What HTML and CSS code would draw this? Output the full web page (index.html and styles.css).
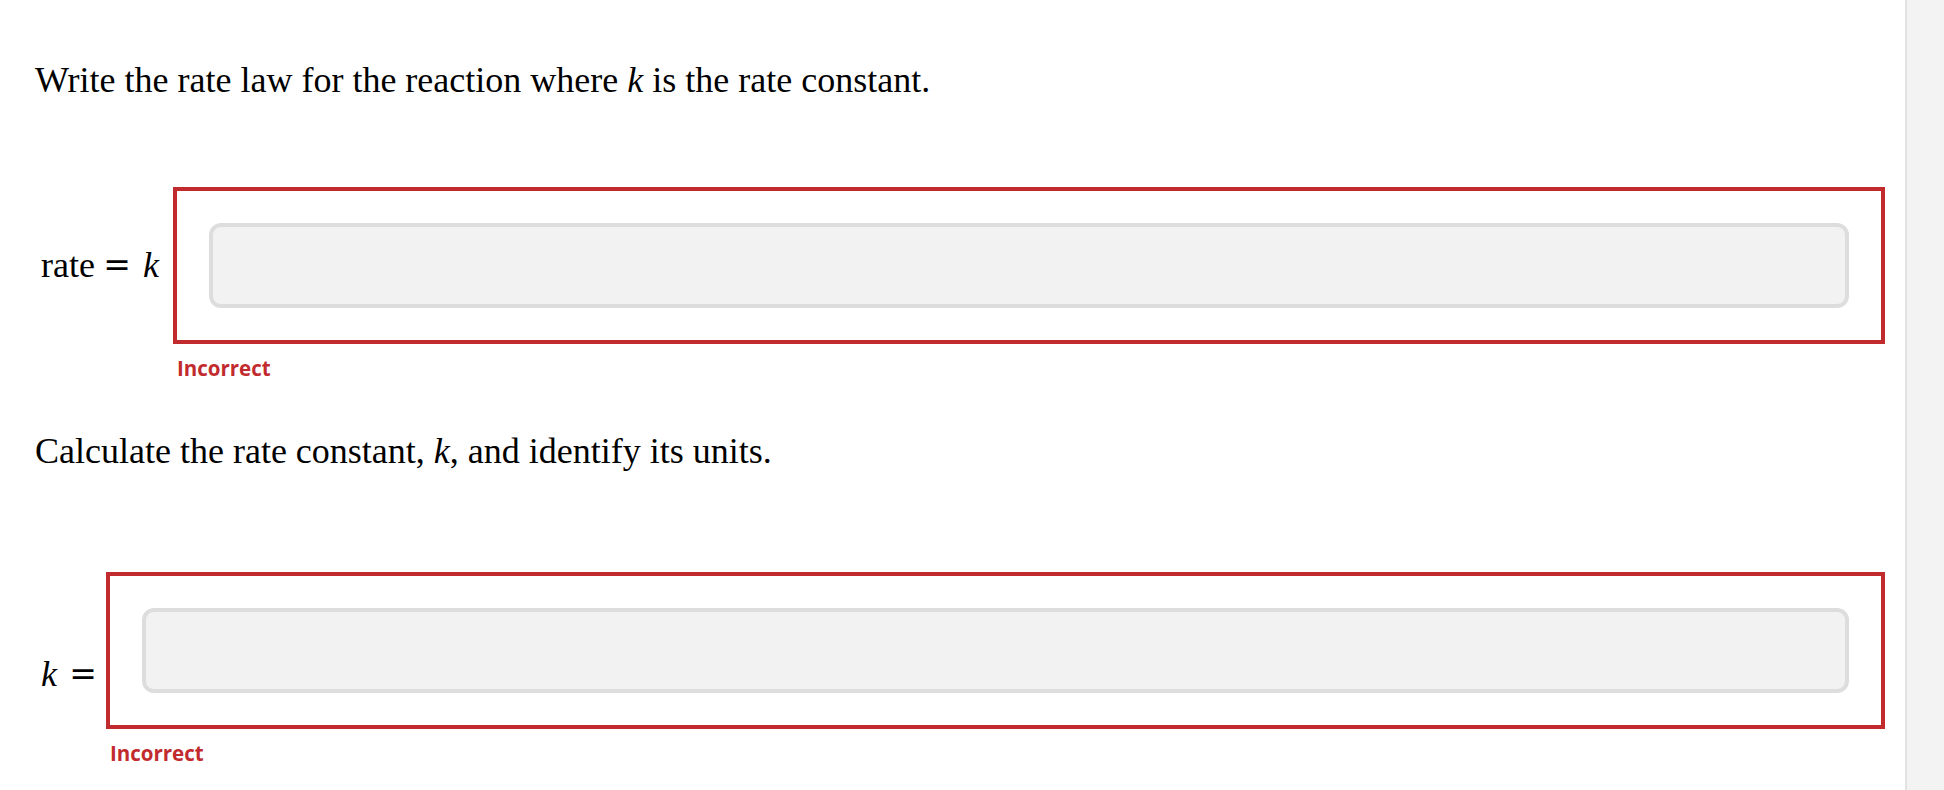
FILE: index.html
```html
<!DOCTYPE html>
<html lang="en">
<head>
<meta charset="utf-8">
<title>Rate law</title>
<link rel="stylesheet" href="styles.css">
</head>
<body>
<div class="page">
  <main class="content">
    <p class="question q1">Write the rate law for the reaction where <i class="var">k</i> is the rate constant.</p>

    <div class="answer-row row1">
      <div class="label"><span class="word">rate</span><span class="rel">=</span><i class="var">k</i></div>
      <div class="field">
        <div class="answer-box"><div class="input"></div></div>
        <div class="feedback">Incorrect</div>
      </div>
    </div>

    <p class="question q2">Calculate the rate constant, <i class="var">k</i>, and identify its units.</p>

    <div class="answer-row row2">
      <div class="label"><i class="var">k</i><span class="rel">=</span></div>
      <div class="field">
        <div class="answer-box"><div class="input"></div></div>
        <div class="feedback">Incorrect</div>
      </div>
    </div>
  </main>
  <div class="scrollbar"></div>
</div>
</body>
</html>
```

FILE: styles.css
```css
html, body {
  margin: 0;
  padding: 0;
  background: #ffffff;
}

.page {
  display: flex;
  height: 790px;
  overflow: hidden;
}

.content {
  flex: 1;
  padding: 0 20px 0 35px;
  font-family: "Liberation Serif", "Times New Roman", serif;
  color: #000;
}

.question {
  margin: 0;
  font-size: 36px;
  line-height: 42px;
}

.q1 { margin-top: 59px; }
.q2 { margin-top: 48px; }

.var {
  font-style: italic;
}

.answer-row {
  display: flex;
  padding-left: 6px;
}

.row1 { margin-top: 86px; }
.row2 { margin-top: 100px; }

.label {
  font-size: 36px;
  line-height: 42px;
  white-space: nowrap;
  height: 42px;
}

.rel {
  display: inline-block;
  width: 28px;
  text-align: center;
  font-family: "DejaVu Serif", "Liberation Serif", serif;
  font-size: 33px;
  vertical-align: 1px;
}

.row1 .label {
  margin-top: 57px;
  margin-right: 14px;
}

.row1 .rel {
  margin: 0 12px 0 8px;
}

.row2 .label {
  margin-top: 81px;
  margin-right: 9px;
}

.row2 .rel {
  margin: 0 0 0 12px;
}

.field {
  flex: 1;
  display: flex;
  flex-direction: column;
}

.answer-box {
  border: 4px solid #c22b2e;
  padding: 32px;
}

.input {
  height: 77px;
  background: #f2f2f2;
  border: 4px solid #dddddd;
  border-radius: 12px;
}

.feedback {
  margin-top: 10px;
  padding-left: 4px;
  font-family: "Open Sans", "Noto Sans", sans-serif;
  font-weight: 700;
  font-size: 20.5px;
  line-height: 28px;
  color: #c22b2e;
}

.scrollbar {
  width: 37px;
  flex: none;
  border-left: 2px solid #e2e2e2;
  background: #f3f3f3;
}
```
